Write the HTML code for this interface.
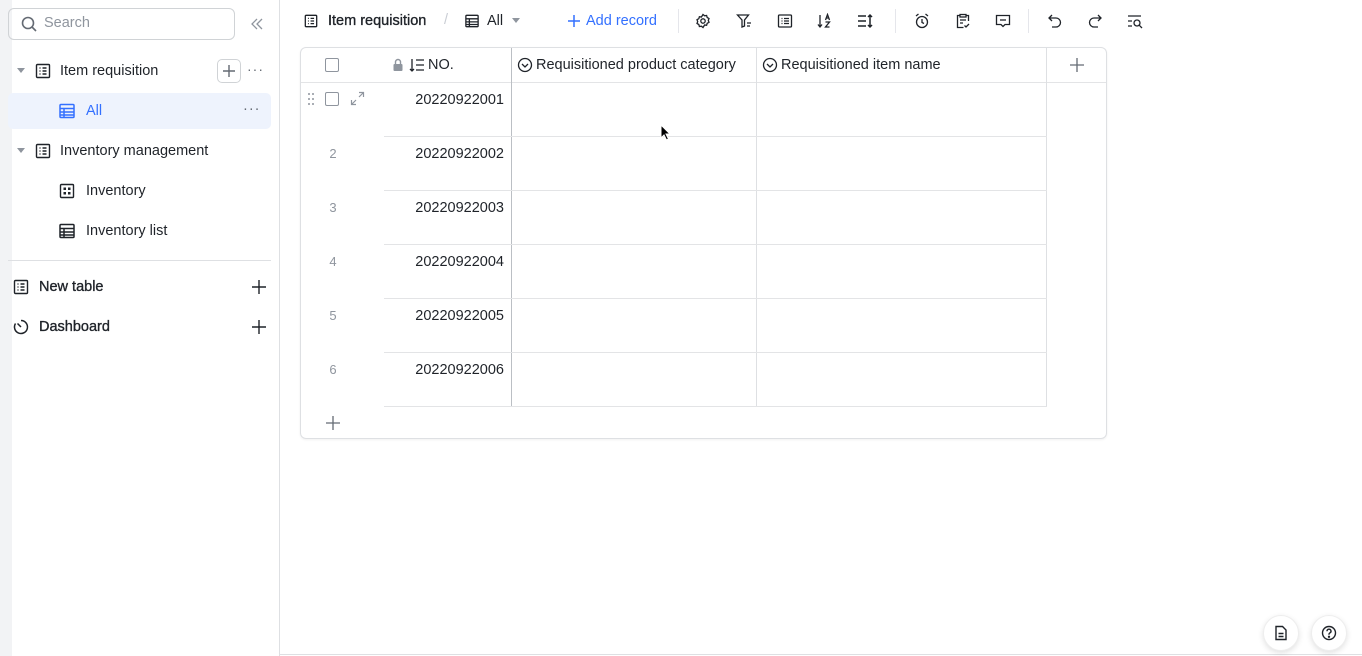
<!DOCTYPE html>
<html><head><meta charset="utf-8"><style>
*{box-sizing:border-box;margin:0;padding:0}
body{width:1362px;height:656px;overflow:hidden;background:#fff;font-family:"Liberation Sans",sans-serif;color:#1f2329;position:relative;font-size:14.5px}
.a{position:absolute}
svg{display:block}
.t{white-space:nowrap}
.hl{position:absolute;height:1px;background:#e3e4e6}
.vl{position:absolute;width:1px;background:#dee0e3}
.num{position:absolute;left:384px;width:120px;text-align:right;font-size:14.5px;color:#1f2329}
.rn{position:absolute;left:326px;width:14px;text-align:center;color:#8f959e;font-size:13px}
.md{-webkit-text-stroke:0.35px #1f2329}
</style></head><body>
<!-- sidebar -->
<div class="a" style="left:0;top:0;width:12px;height:656px;background:#f2f3f5"></div>
<div class="a" style="left:279px;top:0;width:1px;height:656px;background:#dee0e3"></div>
<div class="a" style="left:280px;top:654px;width:1082px;height:1px;background:#dee0e3"></div>
<div class="a" style="left:8px;top:8px;width:227px;height:32px;border:1px solid #d0d3d6;border-radius:6px"></div>
<svg class="a" style="left:20px;top:15px" width="18" height="18" viewBox="0 0 18 18" fill="none" stroke="#646a73" stroke-width="1.6"><circle cx="8" cy="8" r="5.5"/><path d="M12 12l4 4"/></svg>
<div class="a t" style="left:44px;top:15px;color:#8f959e">Search</div>
<svg class="a" style="left:250px;top:17px" width="14" height="14" viewBox="0 0 14 14" fill="none" stroke="#8f959e" stroke-width="1.3"><path d="M7 2L2 7l5 5M12 2L7 7l5 5"/></svg>

<svg class="a" style="left:16px;top:67px" width="10" height="8"><path d="M1 1h8L5 6z" fill="#8f959e"/></svg>
<svg class="a" style="left:35px;top:63px" width="16" height="16" viewBox="0 0 16 16" fill="none" stroke="#1f2329" stroke-width="1.4"><rect x="1.5" y="1.5" width="13" height="13" rx="1"/><path d="M4.5 5h1M4.5 8h1M4.5 11h1M7.5 5h4M7.5 8h4M7.5 11h4"/></svg>
<div class="a t" style="left:60px;top:63px;font-size:14.5px">Item requisition</div>
<div class="a" style="left:217px;top:59px;width:24px;height:24px;border:1px solid #d0d3d6;border-radius:5px"></div>
<svg class="a" style="left:221px;top:63px" width="16" height="16" stroke="#646a73" stroke-width="1.4"><path d="M8 2v12M2 8h12"/></svg>
<div class="a t" style="left:247px;top:61px;color:#646a73;font-size:14px;letter-spacing:1px">···</div>

<div class="a" style="left:8px;top:93px;width:263px;height:36px;background:#eef3fd;border-radius:5px"></div>
<svg class="a" style="left:59px;top:103px" width="16" height="16" viewBox="0 0 16 16" fill="none" stroke="#3370ff" stroke-width="1.5"><rect x="1" y="1.5" width="14" height="13" rx="1"/><path d="M1 5.5h14M1 9h14M1 12h14M5 5.5v9"/></svg>
<div class="a t" style="left:86px;top:103px;color:#3370ff;font-size:14.5px">All</div>
<div class="a t" style="left:243px;top:101px;color:#646a73;letter-spacing:1px">···</div>

<svg class="a" style="left:16px;top:147px" width="10" height="8"><path d="M1 1h8L5 6z" fill="#8f959e"/></svg>
<svg class="a" style="left:35px;top:143px" width="16" height="16" viewBox="0 0 16 16" fill="none" stroke="#1f2329" stroke-width="1.4"><rect x="1.5" y="1.5" width="13" height="13" rx="1"/><path d="M4.5 5h1M4.5 8h1M4.5 11h1M7.5 5h4M7.5 8h4M7.5 11h4"/></svg>
<div class="a t" style="left:60px;top:143px;font-size:14.5px">Inventory management</div>

<svg class="a" style="left:59px;top:183px" width="16" height="16" viewBox="0 0 16 16" fill="none" stroke="#1f2329" stroke-width="1.4"><rect x="1.5" y="1.5" width="13" height="13" rx="1"/><rect x="4.5" y="4.5" width="2.5" height="2.5" fill="#1f2329" stroke="none"/><rect x="9" y="4.5" width="2.5" height="2.5" fill="#1f2329" stroke="none"/><rect x="4.5" y="9" width="2.5" height="2.5" fill="#1f2329" stroke="none"/><rect x="9" y="9" width="2.5" height="2.5" fill="#1f2329" stroke="none"/></svg>
<div class="a t" style="left:86px;top:183px">Inventory</div>
<svg class="a" style="left:59px;top:223px" width="16" height="16" viewBox="0 0 16 16" fill="none" stroke="#1f2329" stroke-width="1.5"><rect x="1" y="1.5" width="14" height="13" rx="1"/><path d="M1 5.5h14M1 9h14M1 12h14M5 5.5v9"/></svg>
<div class="a t" style="left:86px;top:223px">Inventory list</div>

<div class="a" style="left:8px;top:260px;width:263px;height:1px;background:#dee0e3"></div>
<svg class="a" style="left:13px;top:279px" width="16" height="16" viewBox="0 0 16 16" fill="none" stroke="#1f2329" stroke-width="1.4"><rect x="1.5" y="1.5" width="13" height="13" rx="1"/><path d="M4.5 5h1M4.5 8h1M4.5 11h1M7.5 5h4M7.5 8h4M7.5 11h4"/></svg>
<div class="a t md" style="left:39px;top:279px;font-size:14.5px">New table</div>
<svg class="a" style="left:251px;top:279px" width="16" height="16" stroke="#1f2329" stroke-width="1.4"><path d="M8 1v14M1 8h14"/></svg>
<svg class="a" style="left:13px;top:319px" width="16" height="16" viewBox="0 0 16 16" fill="none" stroke="#1f2329" stroke-width="1.5"><path d="M8 1.5A6.5 6.5 0 1 1 2.5 4.5"/><path d="M4.5 4.5L8 8"/></svg>
<div class="a t md" style="left:39px;top:319px">Dashboard</div>
<svg class="a" style="left:251px;top:319px" width="16" height="16" stroke="#1f2329" stroke-width="1.4"><path d="M8 1v14M1 8h14"/></svg>

<!-- toolbar -->
<svg class="a" style="left:304px;top:14px" width="14" height="14" viewBox="0 0 16 16" fill="none" stroke="#1f2329" stroke-width="1.5"><rect x="1.5" y="1.5" width="13" height="13" rx="1"/><path d="M4.5 5h1M4.5 8h1M4.5 11h1M7.5 5h4M7.5 8h4M7.5 11h4"/></svg>
<div class="a t md" style="left:328px;top:13px;font-size:14.5px">Item requisition</div>
<div class="a t" style="left:444px;top:12px;color:#c9cdd4">/</div>
<svg class="a" style="left:465px;top:14px" width="14" height="14" viewBox="0 0 16 16" fill="none" stroke="#1f2329" stroke-width="1.5"><rect x="1" y="1.5" width="14" height="13" rx="1"/><path d="M1 5.5h14M1 9h14M1 12h14M5 5.5v9"/></svg>
<div class="a t" style="left:487px;top:13px">All</div>
<svg class="a" style="left:511px;top:17px" width="10" height="7"><path d="M1 1h8L5 6z" fill="#8f959e"/></svg>
<svg class="a" style="left:567px;top:14px" width="14" height="14" stroke="#3370ff" stroke-width="1.5"><path d="M7 1v12M1 7h12"/></svg>
<div class="a t" style="left:586px;top:13px;color:#3370ff">Add record</div>
<div class="a" style="left:678px;top:9px;width:1px;height:24px;background:#e5e6eb"></div>
<div class="a" style="left:895px;top:9px;width:1px;height:24px;background:#e5e6eb"></div>
<div class="a" style="left:1028px;top:9px;width:1px;height:24px;background:#e5e6eb"></div>
<svg class="a" style="left:695px;top:13px" width="16" height="16" viewBox="0 0 16 16" fill="none" stroke="#1f2329" stroke-width="1.3"><circle cx="8" cy="8" r="2.2"/><path d="M8 1.5l1.6 1.3 2-.3.6 2 1.8 1-.7 1.9.7 1.9-1.8 1-.6 2-2-.3L8 14.5l-1.6-1.3-2 .3-.6-2-1.8-1 .7-1.9-.7-1.9 1.8-1 .6-2 2 .3z"/></svg>
<svg class="a" style="left:736px;top:13px" width="16" height="16" viewBox="0 0 16 16" fill="none" stroke="#1f2329" stroke-width="1.3"><path d="M1.5 2h11l-4 5v6l-2.5 1V7z"/><path d="M11 10h4M11 13h3"/></svg>
<svg class="a" style="left:777px;top:13px" width="16" height="16" viewBox="0 0 16 16" fill="none" stroke="#1f2329" stroke-width="1.3"><rect x="1.5" y="2" width="13" height="12" rx="1"/><path d="M4.5 5.5h1M4.5 8h1M4.5 10.5h1M7 5.5h5M7 8h5M7 10.5h5"/></svg>
<svg class="a" style="left:817px;top:13px" width="16" height="16" viewBox="0 0 16 16" fill="none" stroke="#1f2329" stroke-width="1.3"><path d="M3 2v12M1 11.5L3 14l2-2.5"/><path d="M8.5 7l2-5.5 2 5.5M9.2 5h2.6M8.5 9h4l-4 5h4"/></svg>
<svg class="a" style="left:857px;top:13px" width="16" height="16" viewBox="0 0 16 16" fill="none" stroke="#1f2329" stroke-width="1.5"><path d="M1 3h8M1 8h8M1 13h8M13 2v12M11 4l2-2 2 2M11 12l2 2 2-2"/></svg>
<svg class="a" style="left:914px;top:13px" width="16" height="16" viewBox="0 0 16 16" fill="none" stroke="#1f2329" stroke-width="1.3"><circle cx="8" cy="9" r="5.5"/><path d="M8 6v3.5l2 1M2 3l2.5-2M14 3l-2.5-2"/></svg>
<svg class="a" style="left:955px;top:13px" width="16" height="16" viewBox="0 0 16 16" fill="none" stroke="#1f2329" stroke-width="1.3"><path d="M5 2.5H2.5v12h6M11 2.5h2.5V8"/><rect x="5" y="1.5" width="6" height="2.5"/><path d="M5 7h6M5 10h3M9.5 12.5l1.5 1.5 3-3"/></svg>
<svg class="a" style="left:995px;top:13px" width="16" height="16" viewBox="0 0 16 16" fill="none" stroke="#1f2329" stroke-width="1.3"><path d="M1.5 2.5h13v9H10l-2 2-2-2H1.5z"/><path d="M5 7h6"/></svg>
<svg class="a" style="left:1047px;top:13px" width="16" height="16" viewBox="0 0 16 16" fill="none" stroke="#1f2329" stroke-width="1.3"><path d="M5 2L2 5l3 3M2 5h7a4.5 4.5 0 0 1 0 9H5"/></svg>
<svg class="a" style="left:1087px;top:13px" width="16" height="16" viewBox="0 0 16 16" fill="none" stroke="#1f2329" stroke-width="1.3"><path d="M11 2l3 3-3 3M14 5H7a4.5 4.5 0 0 0 0 9h4"/></svg>
<svg class="a" style="left:1127px;top:13px" width="16" height="16" viewBox="0 0 16 16" fill="none" stroke="#1f2329" stroke-width="1.3"><path d="M1 3h13M1 8h4M1 13h4"/><circle cx="10" cy="10" r="3"/><path d="M12.2 12.2L15 15"/></svg>

<!-- table -->
<div class="a" style="left:300px;top:47px;width:807px;height:392px;border:1px solid #dee0e3;border-radius:6px;box-shadow:0 1px 2px rgba(0,0,0,.06)"></div>
<div class="hl" style="left:301px;top:82px;width:805px"></div>
<div class="vl" style="left:511px;top:48px;height:359px;background:#bbbfc4"></div>
<div class="vl" style="left:756px;top:48px;height:359px"></div>
<div class="vl" style="left:1046px;top:48px;height:359px"></div>
<div class="hl" style="left:384px;top:136px;width:663px"></div>
<div class="hl" style="left:384px;top:190px;width:663px"></div>
<div class="hl" style="left:384px;top:244px;width:663px"></div>
<div class="hl" style="left:384px;top:298px;width:663px"></div>
<div class="hl" style="left:384px;top:352px;width:663px"></div>
<div class="hl" style="left:384px;top:406px;width:663px"></div>

<div class="a" style="left:325px;top:58px;width:14px;height:14px;border:1.3px solid #8f959e;border-radius:2px"></div>
<svg class="a" style="left:392px;top:58px" width="12" height="14" viewBox="0 0 12 14"><rect x="1.5" y="6" width="9" height="7" rx="1" fill="#8f959e"/><path d="M3.5 6V4a2.5 2.5 0 0 1 5 0v2" fill="none" stroke="#8f959e" stroke-width="1.4"/></svg>
<svg class="a" style="left:409px;top:57px" width="16" height="16" viewBox="0 0 16 16" fill="none" stroke="#1f2329" stroke-width="1.3"><path d="M3 2v12M1 12l2 2 2-2M7 3h8M7 8h8M7 13h8"/></svg>
<div class="a t" style="left:428px;top:57px">NO.</div>
<svg class="a" style="left:517px;top:57px" width="16" height="16" viewBox="0 0 16 16" fill="none" stroke="#1f2329" stroke-width="1.3"><circle cx="8" cy="8" r="6.5"/><path d="M5 7l3 3 3-3"/></svg>
<div class="a t" style="left:536px;top:57px">Requisitioned product category</div>
<svg class="a" style="left:762px;top:57px" width="16" height="16" viewBox="0 0 16 16" fill="none" stroke="#1f2329" stroke-width="1.3"><circle cx="8" cy="8" r="6.5"/><path d="M5 7l3 3 3-3"/></svg>
<div class="a t" style="left:781px;top:57px">Requisitioned item name</div>
<svg class="a" style="left:1069px;top:57px" width="16" height="16" stroke="#646a73" stroke-width="1.3"><path d="M8 1v14M1 8h14"/></svg>

<svg class="a" style="left:307px;top:92px" width="8" height="14"><g fill="#8f959e"><circle cx="2" cy="2" r="1"/><circle cx="6" cy="2" r="1"/><circle cx="2" cy="7" r="1"/><circle cx="6" cy="7" r="1"/><circle cx="2" cy="12" r="1"/><circle cx="6" cy="12" r="1"/></g></svg>
<div class="a" style="left:325px;top:92px;width:14px;height:14px;border:1.3px solid #8f959e;border-radius:2px"></div>
<svg class="a" style="left:350px;top:91px" width="15" height="15" viewBox="0 0 15 15" fill="none" stroke="#8f959e" stroke-width="1.2"><path d="M9 1.5h4.5V6M13.5 1.5L9 6M6 13.5H1.5V9M1.5 13.5L6 9"/></svg>
<div class="num" style="top:92px">20220922001</div>
<div class="rn" style="top:146px">2</div><div class="num" style="top:146px">20220922002</div>
<div class="rn" style="top:200px">3</div><div class="num" style="top:200px">20220922003</div>
<div class="rn" style="top:254px">4</div><div class="num" style="top:254px">20220922004</div>
<div class="rn" style="top:308px">5</div><div class="num" style="top:308px">20220922005</div>
<div class="rn" style="top:362px">6</div><div class="num" style="top:362px">20220922006</div>
<svg class="a" style="left:325px;top:415px" width="16" height="16" stroke="#646a73" stroke-width="1.3"><path d="M8 1v14M1 8h14"/></svg>

<svg class="a" style="left:660px;top:124px" width="12" height="18" viewBox="0 0 12 18"><path d="M1 1v13l3-3 2.5 5 2-1-2.5-5H10z" fill="#000" stroke="#fff" stroke-width="1"/></svg>

<!-- bottom buttons -->
<div class="a" style="left:1263px;top:615px;width:36px;height:36px;border-radius:50%;background:#fff;box-shadow:0 2px 6px rgba(0,0,0,.12);border:1px solid #eee"></div>
<svg class="a" style="left:1273px;top:625px" width="16" height="16" viewBox="0 0 16 16" fill="none" stroke="#1f2329" stroke-width="1.4"><path d="M3 1.5h6.5L13 5v9.5H3z"/><path d="M5.5 8.5h5M5.5 11.5h5"/></svg>
<div class="a" style="left:1311px;top:615px;width:36px;height:36px;border-radius:50%;background:#fff;box-shadow:0 2px 6px rgba(0,0,0,.12);border:1px solid #eee"></div>
<svg class="a" style="left:1321px;top:625px" width="16" height="16" viewBox="0 0 16 16" fill="none" stroke="#1f2329" stroke-width="1.4"><circle cx="8" cy="8" r="6.5"/><path d="M6 6.2a2 2 0 1 1 2.8 1.8c-.6.3-.8.7-.8 1.3v.5"/><circle cx="8" cy="11.8" r=".5" fill="#1f2329"/></svg>
</body></html>
